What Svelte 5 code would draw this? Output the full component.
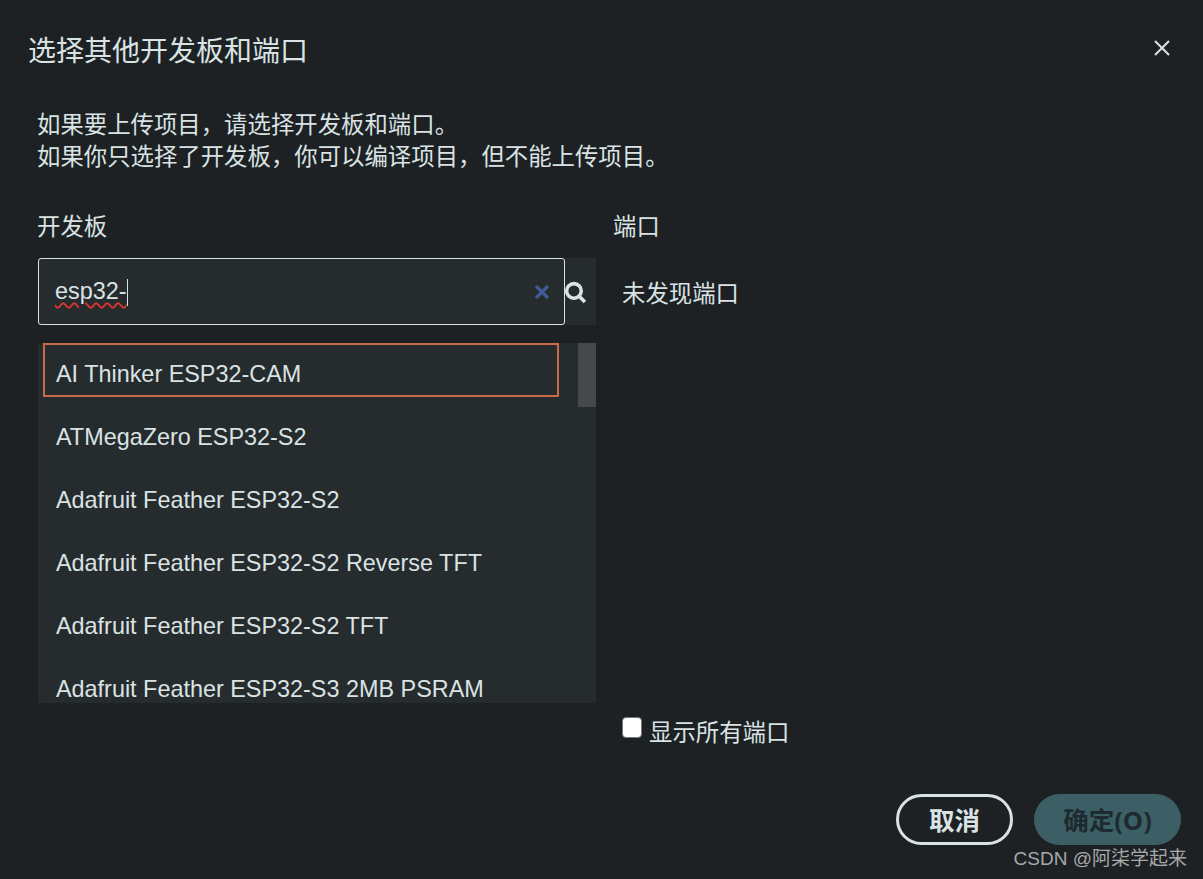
<script>
  const boards = [
    'AI Thinker ESP32-CAM',
    'ATMegaZero ESP32-S2',
    'Adafruit Feather ESP32-S2',
    'Adafruit Feather ESP32-S2 Reverse TFT',
    'Adafruit Feather ESP32-S2 TFT',
    'Adafruit Feather ESP32-S3 2MB PSRAM'
  ];
</script>

<div class="dialog">
  <header class="header">
    <h1>选择其他开发板和端口</h1>
    <button class="close" aria-label="关闭">
      <svg viewBox="0 0 18 18" width="18" height="18"><path d="M2 2 L16 16 M16 2 L2 16" /></svg>
    </button>
  </header>

  <p class="intro">如果要上传项目，请选择开发板和端口。<br />如果你只选择了开发板，你可以编译项目，但不能上传项目。</p>

  <div class="columns">
    <section class="boards">
      <div class="label">开发板</div>
      <div class="search">
        <div class="input">
          <span class="typed">esp32-</span><span class="caret"></span>
          <svg class="clear" viewBox="0 0 16 16" width="16" height="16"><path d="M2 2 L14 14 M14 2 L2 14" /></svg>
        </div>
        <svg class="glass" viewBox="0 0 22 22" width="23" height="23">
          <circle cx="9.5" cy="9.5" r="7" />
          <path d="M14.5 14.5 L20 20" />
        </svg>
      </div>
      <div class="list">
        {#each boards as board, i}
          <div class="row" class:selected={i === 0}>{board}</div>
        {/each}
        <div class="thumb"></div>
      </div>
    </section>

    <section class="ports">
      <div class="label">端口</div>
      <div class="empty">未发现端口</div>
      <label class="show-all"><input type="checkbox" />显示所有端口</label>
    </section>
  </div>

  <footer class="footer">
    <button class="btn cancel">取消</button>
    <button class="btn ok">确定(O)</button>
  </footer>

  <div class="watermark">CSDN @阿柒学起来</div>
</div>

<style>
  :global(body) {
    background: #1d2124;
  }

  .dialog {
    position: relative;
    width: 1203px;
    height: 879px;
    box-sizing: border-box;
    overflow: hidden;
    background: #1d2124;
    color: #dae3e3;
    font-family: "Liberation Sans", "Noto Sans CJK SC", sans-serif;
  }

  .header {
    display: flex;
    align-items: center;
    justify-content: space-between;
    height: 40px;
    padding: 32px 32px 0 28px;
  }

  h1 {
    margin: 0;
    font-size: 28px;
    font-weight: 400;
    line-height: 40px;
  }

  .close {
    display: flex;
    padding: 0;
    margin-top: -9px;
    background: none;
    border: none;
  }

  .close path {
    stroke: #dae3e3;
    stroke-width: 2;
    fill: none;
  }

  .intro {
    margin: 0;
    padding: 37px 0 0 37px;
    font-size: 23.4px;
    line-height: 32px;
  }

  .columns {
    display: grid;
    grid-template-columns: 558px 1fr;
    column-gap: 17px;
    padding: 34px 0 0 38px;
  }

  .label {
    height: 51px;
    margin-left: -1px;
    font-size: 23.4px;
    line-height: 40px;
  }

  .ports .label {
    margin-left: 0;
  }

  .search {
    display: flex;
    align-items: center;
    height: 67px;
    background: #262b2e;
  }

  .input {
    display: flex;
    align-items: center;
    width: 527px;
    height: 67px;
    box-sizing: border-box;
    flex-shrink: 0;
    padding-left: 16px;
    border: 1px solid #dae3e3;
    border-radius: 3px;
    font-size: 23.4px;
  }

  .typed {
    text-decoration: underline wavy #d8362a 1.5px;
    text-underline-offset: 3px;
  }

  .caret {
    width: 1px;
    height: 27px;
    margin-top: 1px;
    background: #dae3e3;
  }

  .clear {
    margin-left: auto;
    margin-right: 14px;
  }

  .clear path {
    stroke: #3f5a96;
    stroke-width: 3.2;
    fill: none;
  }

  .glass {
    margin-top: 2px;
    margin-left: -1px;
  }

  .glass circle,
  .glass path {
    fill: none;
    stroke: #dae3e3;
    stroke-width: 3.4;
  }

  .list {
    position: relative;
    height: 360px;
    margin-top: 18px;
    box-sizing: border-box;
    overflow: hidden;
    background: #262b2e;
  }

  .row {
    display: flex;
    align-items: center;
    height: 54px;
    box-sizing: border-box;
    margin: 0 37px 9px 5px;
    padding: 9px 0 0 11px;
    border: 2px solid transparent;
    font-size: 23.4px;
    white-space: nowrap;
  }

  .row.selected {
    border-color: #c9694a;
  }

  .thumb {
    position: absolute;
    top: 0;
    right: 0;
    width: 18px;
    height: 64px;
    background: #45494c;
  }

  .ports {
    display: flex;
    flex-direction: column;
  }

  .empty {
    height: 67px;
    padding-left: 9px;
    font-size: 23.4px;
    line-height: 72px;
  }

  .show-all {
    display: flex;
    align-items: center;
    margin-top: 393px;
    padding-left: 9px;
    font-size: 23.4px;
    line-height: 30px;
  }

  .show-all input {
    appearance: none;
    width: 20px;
    height: 21px;
    box-sizing: border-box;
    margin: -11px 7px 0 0;
    background: #fff;
    border: 1px solid #767676;
    border-radius: 4px;
  }

  .footer {
    display: flex;
    justify-content: flex-end;
    gap: 21px;
    padding: 46px 22px 0 0;
  }

  .btn {
    height: 51px;
    padding: 0 0 2px;
    border-radius: 26px;
    font-family: "Open Sans", "Noto Sans CJK SC", sans-serif;
    font-size: 25.5px;
    font-weight: 700;
  }

  .cancel {
    width: 117px;
    background: transparent;
    border: 3px solid #dae3e3;
    color: #dae3e3;
  }

  .ok {
    width: 147px;
    background: #3c5f65;
    border: none;
    color: #1d2b30;
  }

  .watermark {
    position: absolute;
    right: 16px;
    top: 847px;
    color: #a6a9aa;
    font-size: 19px;
    line-height: 24px;
    white-space: nowrap;
  }
</style>
